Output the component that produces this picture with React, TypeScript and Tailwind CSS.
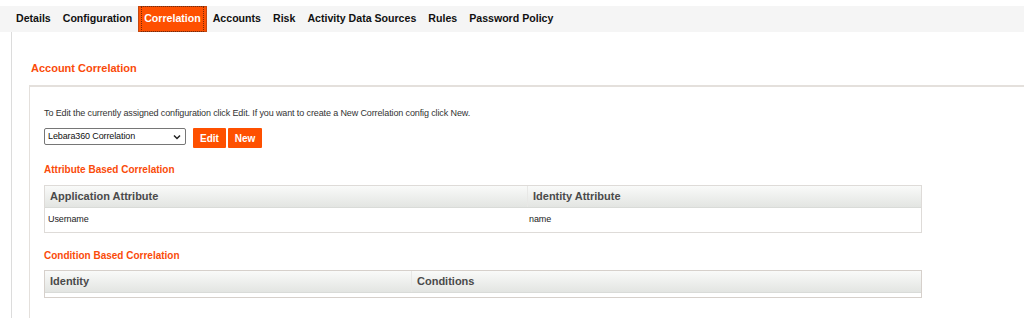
import React from "react";

const tabs = [
  "Details",
  "Configuration",
  "Correlation",
  "Accounts",
  "Risk",
  "Activity Data Sources",
  "Rules",
  "Password Policy",
];

function Header({ cols }: { cols: { label: string; w: string }[] }) {
  return (
    <div className="flex h-[22px] bg-gradient-to-b from-[#f9faf9] to-[#e3e5e2] border-b border-[#d9dbd8]">
      {cols.map((c, i) => (
        <div
          key={c.label}
          className={`${c.w} flex items-center pl-[5px] text-[11px] font-bold text-[#4a4a4a] ${
            i > 0 ? "border-l border-[#e8e8e6]" : ""
          }`}
        >
          {c.label}
        </div>
      ))}
    </div>
  );
}

export default function App() {
  return (
    <div
      className="w-[1024px] h-[318px] bg-white overflow-hidden pt-[6px]"
      style={{ fontFamily: '"Liberation Sans", Arial, sans-serif' }}
    >
      <div className="h-[26px] bg-[#f5f5f5] flex items-stretch pl-[10px]">
        {tabs.map((t) => (
          <div
            key={t}
            className={
              t === "Correlation"
                ? "flex items-center px-[3px] bg-[#fe5000] border border-[#c4470f] text-white text-[10.6px] font-bold"
                : "flex items-center px-[6px] text-[10.6px] font-bold text-[#111]"
            }
          >
            {t === "Correlation" ? (
              <span className="outline outline-1 outline-dotted outline-[#7a2a0a] px-[2px] h-full flex items-center">
                {t}
              </span>
            ) : (
              t
            )}
          </div>
        ))}
      </div>
      <div className="ml-[11px] border-l border-[#dcdcdc] pl-[17px] h-[300px]">
        <div className="pt-[29px] pl-[2px] text-[11px] leading-[14px] font-bold text-[#fa4b0a]">
          Account Correlation
        </div>
        <div className="mt-[10px] border-t-2 border-l border-[#e4e0dc] pl-[14px] h-[240px]">
          <div className="pt-[20px] text-[9px] tracking-[-0.12px] leading-[12px] text-[#333]">
            To Edit the currently assigned configuration click Edit. If you want to create a New Correlation config click New.
          </div>
          <div className="mt-[9px] flex items-start">
            <div className="w-[142px] h-[17px] border border-[#767676] rounded-[2px] flex items-center justify-between pl-[3px] pr-[4px] text-[9px] tracking-[-0.12px] text-[#111]">
              <span>Lebara360 Correlation</span>
              <svg width="8" height="6" viewBox="0 0 8 6">
                <path d="M1 1.5 L4 4.5 L7 1.5" stroke="#222" strokeWidth="1.5" fill="none" />
              </svg>
            </div>
            <button className="ml-[7px] w-[33px] h-[20px] bg-[#fe5000] text-white text-[10px] font-bold rounded-[1px]">
              Edit
            </button>
            <button className="ml-[2px] w-[34px] h-[20px] bg-[#fe5000] text-white text-[10px] font-bold rounded-[1px]">
              New
            </button>
          </div>
          <div className="mt-[16px] text-[10px] leading-[12px] font-bold text-[#fa4b0a]">
            Attribute Based Correlation
          </div>
          <div className="mt-[9px] w-[878px] border border-[#dedbd8]">
            <Header
              cols={[
                { label: "Application Attribute", w: "w-[482px]" },
                { label: "Identity Attribute", w: "flex-1" },
              ]}
            />
            <div className="flex h-[24px] items-center text-[9px] tracking-[-0.12px] text-[#222]">
              <div className="w-[482px] pl-[3px]">Username</div>
              <div className="flex-1 pl-[2px]">name</div>
            </div>
          </div>
          <div className="mt-[17px] text-[10px] leading-[12px] font-bold text-[#fa4b0a]">
            Condition Based Correlation
          </div>
          <div className="mt-[8px] w-[878px] border border-[#d6d0cb]">
            <Header
              cols={[
                { label: "Identity", w: "w-[366px]" },
                { label: "Conditions", w: "flex-1" },
              ]}
            />
            <div className="h-[4px]" />
          </div>
        </div>
      </div>
    </div>
  );
}
